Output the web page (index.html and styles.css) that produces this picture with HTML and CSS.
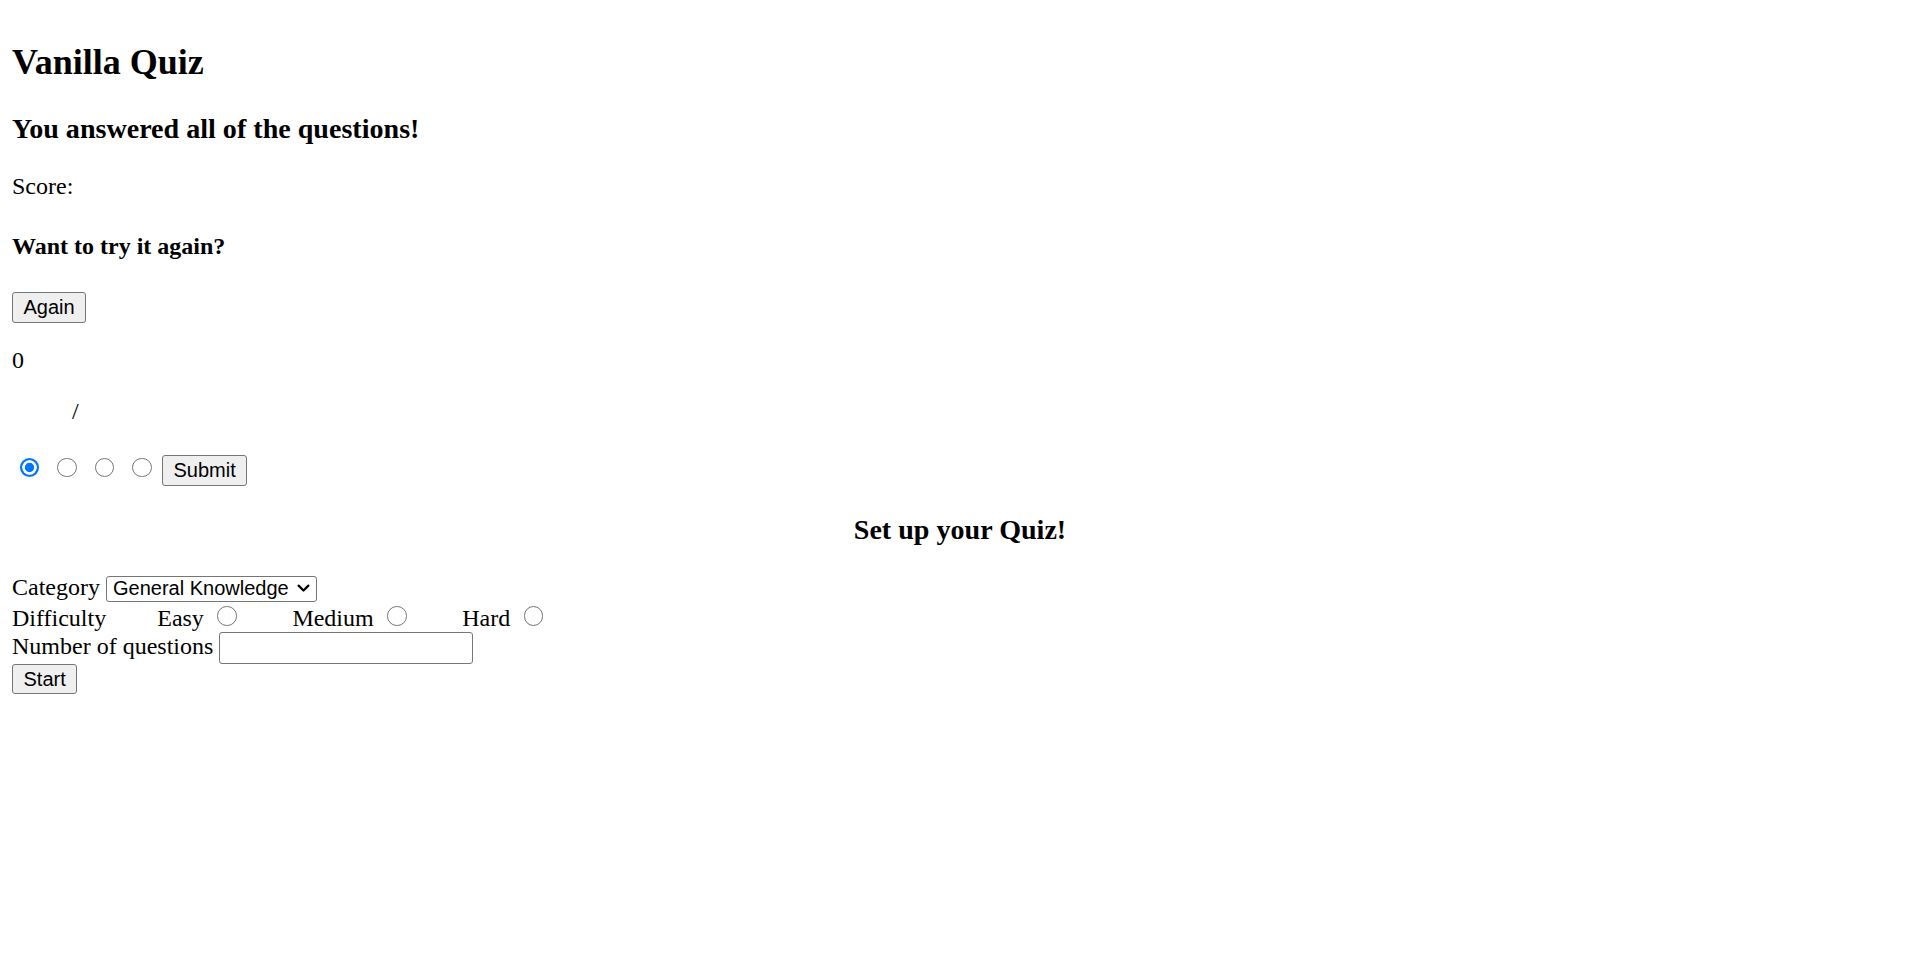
FILE: index.html
```html
<!DOCTYPE html>
<html lang="en">
<head>
<meta charset="utf-8">
<title>Vanilla Quiz</title>
<link rel="stylesheet" href="styles.css">
</head>
<body class="page">
  <h2 class="title">Vanilla Quiz</h2>
  <section class="results">
    <h3 class="subtitle">You answered all of the questions!</h3>
    <p class="text">Score: <span class="score-value"></span></p>
    <h4 class="retry">Want to try it again?</h4>
    <div class="row"><button class="btn" type="button">Again</button></div>
  </section>
  <section class="quiz">
    <p class="text">0</p>
    <p class="text counter"><span class="current"></span>/<span class="total"></span></p>
    <div class="answers">
      <input class="radio" type="radio" name="answer" checked>
      <input class="radio" type="radio" name="answer">
      <input class="radio" type="radio" name="answer">
      <input class="radio" type="radio" name="answer">
      <button class="btn" type="button">Submit</button>
    </div>
  </section>
  <section class="setup">
    <h3 class="subtitle centered">Set up your Quiz!</h3>
    <form class="setup-form">
      <label class="lbl">Category</label> <span class="select-wrap"><select class="select"><option>General Knowledge</option></select><svg class="chev" width="13" height="9" viewBox="0 0 13 9"><path d="M1.6 1.6 L6.5 6.5 L11.4 1.6" fill="none" stroke="#000" stroke-width="2.2" stroke-linecap="round" stroke-linejoin="round"/></svg></span><br>
      <span class="lbl">Difficulty</span> <label class="diff">Easy</label> <input class="radio" type="radio" name="difficulty"> <label class="diff">Medium</label> <input class="radio" type="radio" name="difficulty"> <label class="diff">Hard</label> <input class="radio" type="radio" name="difficulty"><br>
      <label class="lbl">Number of questions</label> <input class="field" type="text"><br>
      <button class="btn" type="button">Start</button>
    </form>
  </section>
</body>
</html>
```
FILE: styles.css
```css
html {
  background: #fff;
}

.page {
  margin: 0;
  padding: 12px;
  font-family: "Liberation Serif", "Times New Roman", serif;
  font-size: 24px;
  line-height: 1.149;
  color: #000;
  background: #fff;
}

.title {
  font-size: 36px;
  font-weight: bold;
  margin: 29.88px 0;
}

.subtitle {
  font-size: 28.08px;
  font-weight: bold;
  margin: 28.08px 0;
}

.centered {
  text-align: center;
}

.retry {
  font-size: 24px;
  font-weight: bold;
  margin: 31.92px 0;
}

.text {
  margin: 24px 0;
}

.counter {
  padding-left: 60px;
}

.answers {
  margin-top: 27px;
}

.btn {
  font-family: "Liberation Sans", Arial, sans-serif;
  font-size: 20px;
  line-height: 23px;
  color: #000;
  background: #efefef;
  border: 1.5px solid #767676;
  border-radius: 3px;
  padding: 2.75px 10.5px;
  margin: 0;
}

.radio {
  appearance: none;
  -webkit-appearance: none;
  box-sizing: border-box;
  width: 19.5px;
  height: 19.5px;
  margin: 4.5px 4.5px 0 7.5px;
  border: 1.5px solid #767676;
  border-radius: 50%;
  background: #fff;
  vertical-align: baseline;
}

.radio:checked {
  border: 2px solid #0075ff;
  background: #0075ff;
  box-shadow: inset 0 0 0 2.8px #fff;
}

.setup-form {
  margin: 0;
}

.diff {
  margin-left: 45px;
}

.select-wrap {
  position: relative;
  display: inline-flex;
}

.select {
  appearance: none;
  -webkit-appearance: none;
  box-sizing: border-box;
  width: 210.7px;
  height: 26.3px;
  margin: 0;
  padding: 0 6px;
  font-family: "Liberation Sans", Arial, sans-serif;
  font-size: 20px;
  line-height: 23px;
  color: #000;
  background: #fff;
  border: 1.5px solid #767676;
  border-radius: 3px;
}

.chev {
  position: absolute;
  right: 7px;
  top: 8.5px;
  pointer-events: none;
}

.field {
  box-sizing: border-box;
  width: 254px;
  height: 31.6px;
  margin: 0;
  padding: 1.5px 3px;
  font-family: "Liberation Sans", Arial, sans-serif;
  font-size: 20px;
  line-height: 23px;
  color: #000;
  background: #fff;
  border: 1.5px solid #767676;
  border-radius: 3px;
}
```
